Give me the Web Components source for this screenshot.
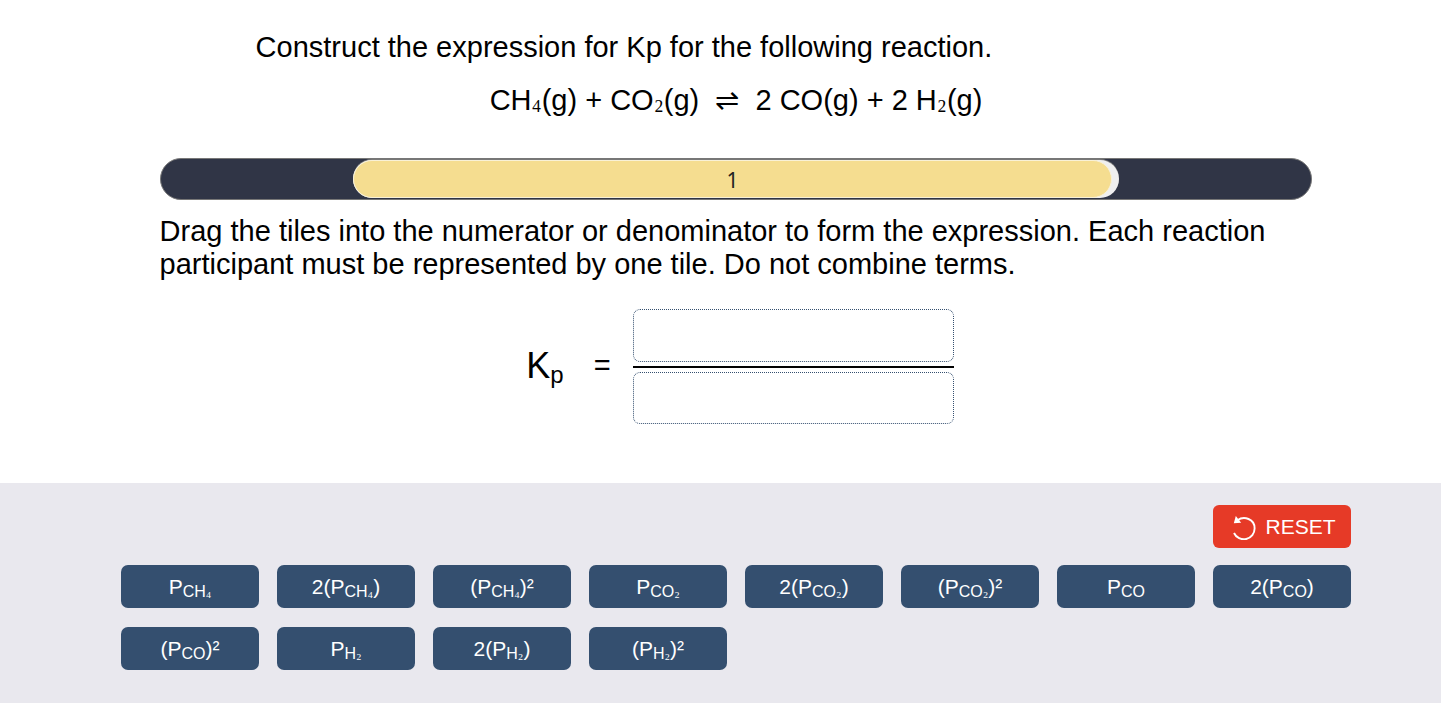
<!DOCTYPE html>
<html lang="en">
<head>
<meta charset="utf-8">
<meta name="viewport" content="width=device-width, initial-scale=1">
<title>Kp expression</title>
<style>
  body {
    margin: 0;
    background: #fff;
    color: #000;
    font-family: "Liberation Sans", Arial, sans-serif;
  }
  /* subscript digits */
  i {
    font-family: "Liberation Serif", "Times New Roman", serif;
    font-style: normal;
    line-height: 0;
    vertical-align: 4px;
  }
  sub i {
    vertical-align: 2px;
  }
</style>
</head>
<body>
<kp-exercise>
  <reaction-prompt slot="prompt">
    Construct the expression for Kp for the following reaction.
    <span slot="equation">CH<i>₄</i>(g) + CO<i>₂</i>(g) &nbsp;⇌&nbsp; 2 CO(g) + 2 H<i>₂</i>(g)</span>
  </reaction-prompt>
  <step-bar slot="steps">1</step-bar>
  <p slot="instructions">Drag the tiles into the numerator or denominator to form the expression. Each reaction participant must be represented by one tile. Do not combine terms.</p>
  <kp-fraction slot="answer">K<sub>p</sub></kp-fraction>
  <tile-tray slot="tray">
    <expression-tile>P<sub>CH<i>₄</i></sub></expression-tile>
    <expression-tile>2(P<sub>CH<i>₄</i></sub>)</expression-tile>
    <expression-tile>(P<sub>CH<i>₄</i></sub>)²</expression-tile>
    <expression-tile>P<sub>CO<i>₂</i></sub></expression-tile>
    <expression-tile>2(P<sub>CO<i>₂</i></sub>)</expression-tile>
    <expression-tile>(P<sub>CO<i>₂</i></sub>)²</expression-tile>
    <expression-tile>P<sub>CO</sub></expression-tile>
    <expression-tile>2(P<sub>CO</sub>)</expression-tile>
    <expression-tile>(P<sub>CO</sub>)²</expression-tile>
    <expression-tile>P<sub>H<i>₂</i></sub></expression-tile>
    <expression-tile>2(P<sub>H<i>₂</i></sub>)</expression-tile>
    <expression-tile>(P<sub>H<i>₂</i></sub>)²</expression-tile>
  </tile-tray>
</kp-exercise>

<script>
const define = (name, html, setup) => {
  const template = document.createElement("template")
  template.innerHTML = html

  customElements.define(name, class extends HTMLElement {
    constructor() {
      super()
      this.attachShadow({ mode: "open" })
      this.shadowRoot.appendChild(template.content.cloneNode(true))
      if (setup) setup(this, this.shadowRoot)
    }
  })
}

define("kp-exercise", `
  <style>
    :host {
      display: flex;
      flex-direction: column;
      min-height: 100vh;
      font-size: 29px;
      line-height: 33px;
    }
    main {
      flex: 1;
      width: 80%;
      align-self: center;
      box-sizing: border-box;
      margin-left: 31px;
      padding: 31px 0 59px;
    }
    ::slotted(p) {
      margin: 15px 0 28px;
    }
  </style>
  <main>
    <slot name="prompt"></slot>
    <slot name="steps"></slot>
    <slot name="instructions"></slot>
    <slot name="answer"></slot>
  </main>
  <slot name="tray"></slot>
`)

define("reaction-prompt", `
  <style>
    :host {
      display: block;
      margin-bottom: 41px;
    }
    .question {
      margin: 0 96px 20px;
    }
    .equation {
      height: 33px;
      text-align: center;
    }
  </style>
  <div class="question"><slot></slot></div>
  <div class="equation"><slot name="equation"></slot></div>
`)

define("step-bar", `
  <style>
    :host {
      display: flex;
      justify-content: center;
      box-sizing: border-box;
      height: 42px;
      border: 1px solid #777;
      border-radius: 21px;
      background: #303546;
    }
    .track {
      width: 766px;
      height: 38px;
      box-sizing: border-box;
      margin-top: 1px;
      padding-right: 7px;
      border-radius: 19px;
      background: #efefef;
      box-shadow: 0 -1px #777;
    }
    .step {
      display: block;
      box-sizing: border-box;
      width: 100%;
      height: 100%;
      padding: 3px 0 0;
      border: 1px solid #f9f1d6;
      border-radius: 19px;
      background: #f5dd90;
      color: #222;
      font: 21px/33px "Noto Sans", sans-serif;
    }
  </style>
  <div class="track"><button class="step" type="button"><slot></slot></button></div>
`)

define("kp-fraction", `
  <style>
    :host {
      display: flex;
      justify-content: center;
      align-items: center;
      margin-right: -8px;
      font-size: 36px;
    }
    .name, .equals {
      padding-bottom: 3px;
    }
    .equals {
      margin: 0 22px 0 30px;
      font-size: 29px;
    }
    .fraction {
      width: 321px;
    }
    .bar {
      height: 2px;
      margin: 4px 0;
      background: #000;
    }
    ::slotted(sub) {
      font-size: 24px;
      line-height: 0;
      vertical-align: -5px;
    }
  </style>
  <div class="name"><slot></slot></div>
  <div class="equals">=</div>
  <div class="fraction">
    <drop-zone></drop-zone>
    <div class="bar"></div>
    <drop-zone></drop-zone>
  </div>
`)

define("drop-zone", `
  <style>
    :host {
      display: block;
      box-sizing: border-box;
      height: 53px;
      border: 1px dotted #344f6f;
      border-radius: 7px;
    }
    :host(:last-child) {
      height: 52px;
    }
  </style>
  <slot></slot>
`)

define("tile-tray", `
  <style>
    :host {
      display: block;
      box-sizing: border-box;
      min-height: 220px;
      padding: 22px 90px 33px 121px;
      background: #e9e8ee;
    }
    .actions {
      display: flex;
      justify-content: flex-end;
      margin-bottom: 17px;
    }
    .tiles {
      display: grid;
      grid-template-columns: repeat(auto-fill, 138px);
      gap: 19px 18px;
    }
    .reset {
      display: flex;
      align-items: center;
      justify-content: center;
      gap: 9px;
      box-sizing: border-box;
      width: 138px;
      height: 43px;
      padding: 0 0 0 4px;
      border: 0;
      border-radius: 6px;
      background: #e63a27;
      color: #fff;
      font: 21px/24px "Liberation Sans", Arial, sans-serif;
      cursor: pointer;
    }
    svg {
      width: 24px;
      height: 26px;
    }
  </style>
  <div class="actions">
    <button class="reset" type="button">
      <svg viewBox="0 0 24 26" aria-hidden="true">
        <path d="M5.500 6.300C12 1.500 22.600 5 22.600 14.200A10.800 10.800 0 0 1 2 19" fill="none" stroke="#fff" stroke-width="1.900"/>
        <path d="M3.800 2 1.800 9.300 9.200 8.700Z" fill="#fff"/>
      </svg>
      RESET
    </button>
  </div>
  <div class="tiles"><slot></slot></div>
`, (host, root) => {
  // send every dropped tile back to the tray
  root.querySelector(".reset").addEventListener("click", () => {
    document.querySelectorAll("expression-tile").forEach(tile => host.appendChild(tile))
  })
})

define("expression-tile", `
  <style>
    :host {
      display: block;
      height: 43px;
    }
    button {
      display: block;
      width: 100%;
      height: 100%;
      padding: 0;
      border: 0;
      border-radius: 7px;
      background: #344f6f;
      color: #fff;
      font: 21px/43px "Liberation Sans", Arial, sans-serif;
      cursor: grab;
    }
    ::slotted(sub) {
      font-size: 16px;
      line-height: 0;
      vertical-align: -3px;
    }
  </style>
  <button type="button" draggable="true"><slot></slot></button>
`)
</script>
</body>
</html>
